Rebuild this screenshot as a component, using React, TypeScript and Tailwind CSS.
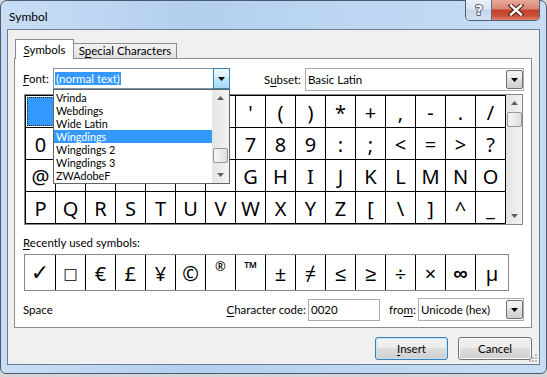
import React from "react";

const rows: string[][] = [
  [" ", "!", '"', "#", "$", "%", "&", "'", "(", ")", "*", "+", ",", "-", ".", "/"],
  "0123456789:;<=>?".split(""),
  "@ABCDEFGHIJKLMNO".split(""),
  "PQRSTUVWXYZ[\\]^_".split(""),
];

const recent = ["✓", "□", "€", "£", "¥", "©", "®", "™", "±", "≠", "≤", "≥", "÷", "×", "∞", "µ"];

const fonts = ["Vrinda", "Webdings", "Wide Latin", "Wingdings", "Wingdings 2", "Wingdings 3", "ZWAdobeF"];

function Tri({ up = false, color = "#000" }: { up?: boolean; color?: string }) {
  return (
    <svg width="7" height="4" viewBox="0 0 7 4" className="block">
      <path d={up ? "M0 4H7L3.5 0Z" : "M0 0H7L3.5 4Z"} fill={color} />
    </svg>
  );
}

function U({ children }: { children: React.ReactNode }) {
  return <span className="underline underline-offset-[2px]">{children}</span>;
}

function DropBtn() {
  return (
    <div className="w-[17px] h-[19px] border border-[#707070] rounded-[2px] bg-[linear-gradient(#f2f2f2_0%,#ebebeb_49%,#dddddd_50%,#cfcfcf_100%)] flex items-center justify-center">
      <Tri />
    </div>
  );
}

export default function App() {
  return (
    <div className="w-[547px] h-[377px] bg-[#d4d6d9] font-['Lato',sans-serif] text-[11.5px] text-black whitespace-nowrap">
      <div className="w-[547px] h-[374px] rounded-t-[7px] rounded-b-[6px] border border-[#4b5a6d] bg-[linear-gradient(90deg,#c9def5_0%,#b3cfee_35%,#bcd6f1_60%,#c6ddf5_100%)] flex flex-col px-[6px] pb-[8px]">
        {/* Title bar */}
        <div className="h-[28px] flex justify-between shrink-0">
          <div className="pl-[2px] pt-[8px] leading-[16px] text-[12px]">Symbol</div>
          <div className="flex -mt-px h-[21px] border border-t-0 border-[#4f5f75] rounded-b-[5px] overflow-hidden">
            <div className="w-[26px] h-full border-r border-[#5c6c82] bg-[linear-gradient(#e9f0f8_0%,#dbe5f1_45%,#c5d5e8_50%,#d2e0f0_100%)] flex items-center justify-center">
              <svg width="14" height="16" viewBox="0 0 14 16">
                <text x="7" y="13" textAnchor="middle" fontFamily="DejaVu Sans, sans-serif" fontWeight="bold" fontSize="14" fill="#ffffff" stroke="#3d4c60" strokeWidth="1.6" paintOrder="stroke">?</text>
              </svg>
            </div>
            <div className="w-[47px] h-full bg-[linear-gradient(#e9a898_0%,#d98573_45%,#c2402c_50%,#cc5139_80%,#e2836a_100%)] flex items-center justify-center">
              <svg width="16" height="12" viewBox="0 0 16 12">
                <path d="M3 1.5L13 10.5M13 1.5L3 10.5" stroke="#5a1f17" strokeWidth="4.6" strokeLinecap="square" />
                <path d="M3 1.5L13 10.5M13 1.5L3 10.5" stroke="#ffffff" strokeWidth="2.4" strokeLinecap="square" />
              </svg>
            </div>
          </div>
        </div>

        {/* Client area */}
        <div className="relative flex-1 border border-[#6b7d93] bg-[#f0f0f0] flex flex-col pt-[9px]">
          {/* Tabs */}
          <div className="flex items-end ml-[7px] relative z-10 -mb-px">
            <div className="h-[20px] w-[59px] border border-b-0 border-[#898c95] bg-white flex items-center justify-center pt-[1px] leading-[16px]">
              <span><U>S</U>ymbols</span>
            </div>
            <div className="h-[15px] mb-px w-[103px] border border-l-0 border-b-0 border-[#898c95] bg-[linear-gradient(#f3f3f3_0%,#ebebeb_50%,#dedede_100%)] flex items-center justify-center leading-[14px]">
              <span>S<U>p</U>ecial Characters</span>
            </div>
          </div>

          {/* Tab panel */}
          <div className="ml-[6px] w-[518px] h-[270px] border border-[#898c95] bg-white pl-[8px] pr-[7px] pt-[9px] flex flex-col">
            {/* Font / Subset row */}
            <div className="flex h-[23px] items-start relative z-20">
              <div className="w-[30px] h-[21px] flex items-center leading-[16px]"><span><U>F</U>ont:</span></div>
              <div className="relative w-[177px] h-[21px] border border-[#7d93ae] bg-white flex">
                <div className="flex-1 flex items-center pl-px">
                  <span className="bg-[#3399ff] text-white leading-[13px] px-px">(normal text)</span>
                </div>
                <div className="w-[17px] h-[21px] -my-px -mr-px border border-[#3c7fb1] bg-[linear-gradient(#eaf6fd_0%,#d9f0fc_49%,#bee6fd_50%,#a7d9f5_100%)] flex items-center justify-center">
                  <Tri />
                </div>
                {/* Drop-down list */}
                <div className="absolute left-[-1px] top-[20px] w-[177px] h-[95px] border border-[#646464] bg-white flex">
                  <div className="flex-1 pt-px overflow-hidden text-[10.8px]">
                    {fonts.map((f) => (
                      <div
                        key={f}
                        className={
                          f === "Wingdings"
                            ? "h-[13px] leading-[13px] pl-[2px] bg-[#3399ff] text-white"
                            : "h-[13px] leading-[13px] pl-[2px]"
                        }
                      >
                        {f}
                      </div>
                    ))}
                  </div>
                  <div className="w-[17px] h-full bg-[linear-gradient(90deg,#e4e4e4,#f3f3f3)] flex flex-col items-center">
                    <div className="h-[16px] w-full flex items-center justify-center"><Tri up color="#5f5f5f" /></div>
                    <div className="h-[42px]" />
                    <div className="w-[15px] h-[15px] rounded-[2px] border border-[#979797] bg-[linear-gradient(90deg,#f6f6f6,#dedede)]" />
                    <div className="flex-1" />
                    <div className="h-[16px] w-full flex items-center justify-center"><Tri color="#5f5f5f" /></div>
                  </div>
                </div>
              </div>
              <div className="w-[34px]" />
              <div className="w-[41px] h-[23px] flex items-center leading-[16px]"><span>S<U>u</U>bset:</span></div>
              <div className="w-[219px] h-[23px] border border-[#abadb3] bg-white flex items-start">
                <div className="flex-1 h-full flex items-center pl-[2px] leading-[16px]">Basic Latin</div>
                <div className="pt-px"><DropBtn /></div>
              </div>
            </div>

            {/* Symbol grid */}
            <div className="ml-px mt-[3px] w-[499px] h-[131px] border border-[#828790] flex shrink-0 font-['Noto_Sans',sans-serif]">
              <div className="grid grid-cols-[repeat(16,29px)] grid-rows-[repeat(4,31px)] gap-px bg-black p-px">
                {rows.map((r, ri) =>
                  r.map((c, ci) =>
                    ri === 0 && ci === 0 ? (
                      <div key={`${ri}-${ci}`} className="bg-white p-px">
                        <div className="w-full h-full bg-[#3399ff] border border-dotted border-[#222]" />
                      </div>
                    ) : (
                      <div key={`${ri}-${ci}`} className="bg-white flex items-center justify-center text-[20px] leading-none pt-[2px]">
                        {ri < 3 && ci >= 1 && ci <= 6 ? "" : c}
                      </div>
                    )
                  )
                )}
              </div>
              <div className="w-[16px] h-full bg-[linear-gradient(90deg,#e4e4e4,#f3f3f3)] flex flex-col items-center">
                <div className="h-[16px] w-full flex items-center justify-center"><Tri up color="#5f5f5f" /></div>
                <div className="w-[15px] h-[15px] mt-px rounded-[2px] border border-[#979797] bg-[linear-gradient(90deg,#f6f6f6,#dedede)]" />
                <div className="flex-1" />
                <div className="h-[16px] w-full flex items-center justify-center"><Tri color="#5f5f5f" /></div>
              </div>
            </div>

            {/* Recently used */}
            <div className="mt-[10px] h-[16px] leading-[16px]"><U>R</U>ecently used symbols:</div>
            <div className="ml-px mt-[3px] w-[485px] h-[37px] border border-[#828790] grid grid-cols-[30px_repeat(14,29px)_32px] gap-px bg-black shrink-0 font-['Noto_Sans',sans-serif]">
              {recent.map((c, i) => (
                <div
                  key={i}
                  className={
                    c === "✓"
                      ? "bg-white flex items-center justify-center text-[22px] leading-none font-['DejaVu_Sans',sans-serif]"
                      : c === "□"
                      ? "bg-white flex items-center justify-center text-[15px] leading-none pt-[4px] font-['DejaVu_Sans',sans-serif]"
                      : c === "®"
                      ? "bg-white flex items-start justify-center text-[13px] leading-none pt-[5px]"
                      : c === "™"
                      ? "bg-white flex items-start justify-center text-[17px] leading-none pt-[4px]"
                      : c === "∞"
                      ? "bg-white flex items-center justify-center text-[20px] leading-none font-bold"
                      : "bg-white flex items-center justify-center text-[20px] leading-none pt-[2px]"
                  }
                >
                  {c}
                </div>
              ))}
            </div>

            {/* Bottom row */}
            <div className="mt-[7px] h-[23px] flex items-center">
              <div className="flex-1 leading-[16px]">Space</div>
              <div className="mr-[2px] leading-[16px]"><U>C</U>haracter code:</div>
              <div className="w-[72px] h-[22px] border border-[#abadb3] bg-white flex items-center pl-[2px] leading-[16px]">0020</div>
              <div className="ml-[9px] w-[29px] leading-[16px]">fro<U>m</U>:</div>
              <div className="w-[106px] h-[23px] border border-[#abadb3] bg-white flex items-start">
                <div className="flex-1 h-full flex items-center pl-[2px] leading-[16px]">Unicode (hex)</div>
                <div className="pt-px"><DropBtn /></div>
              </div>
            </div>
          </div>

          {/* Buttons */}
          <div className="mt-[9px] flex justify-end pr-[7px] gap-[10px]">
            <button className="w-[73px] h-[23px] border border-[#3c7fb1] rounded-[3px] bg-[linear-gradient(#f2f2f2_0%,#ebebeb_49%,#dddddd_50%,#cfcfcf_100%)] shadow-[inset_0_0_0_1px_#bfe6fd] leading-[16px]">
              <U>I</U>nsert
            </button>
            <button className="w-[74px] h-[23px] border border-[#707070] rounded-[3px] bg-[linear-gradient(#f2f2f2_0%,#ebebeb_49%,#dddddd_50%,#cfcfcf_100%)] shadow-[inset_0_0_0_1px_#fcfcfc] leading-[16px]">
              Cancel
            </button>
          </div>

          {/* Resize grip */}
          <svg className="absolute right-[1px] bottom-[1px]" width="11" height="11" viewBox="0 0 11 11">
            <rect x="8" y="2" width="2" height="2" fill="#b8b8b8" />
            <rect x="5" y="5" width="2" height="2" fill="#b8b8b8" />
            <rect x="8" y="5" width="2" height="2" fill="#b8b8b8" />
            <rect x="2" y="8" width="2" height="2" fill="#b8b8b8" />
            <rect x="5" y="8" width="2" height="2" fill="#b8b8b8" />
            <rect x="8" y="8" width="2" height="2" fill="#b8b8b8" />
          </svg>
        </div>
      </div>
    </div>
  );
}
